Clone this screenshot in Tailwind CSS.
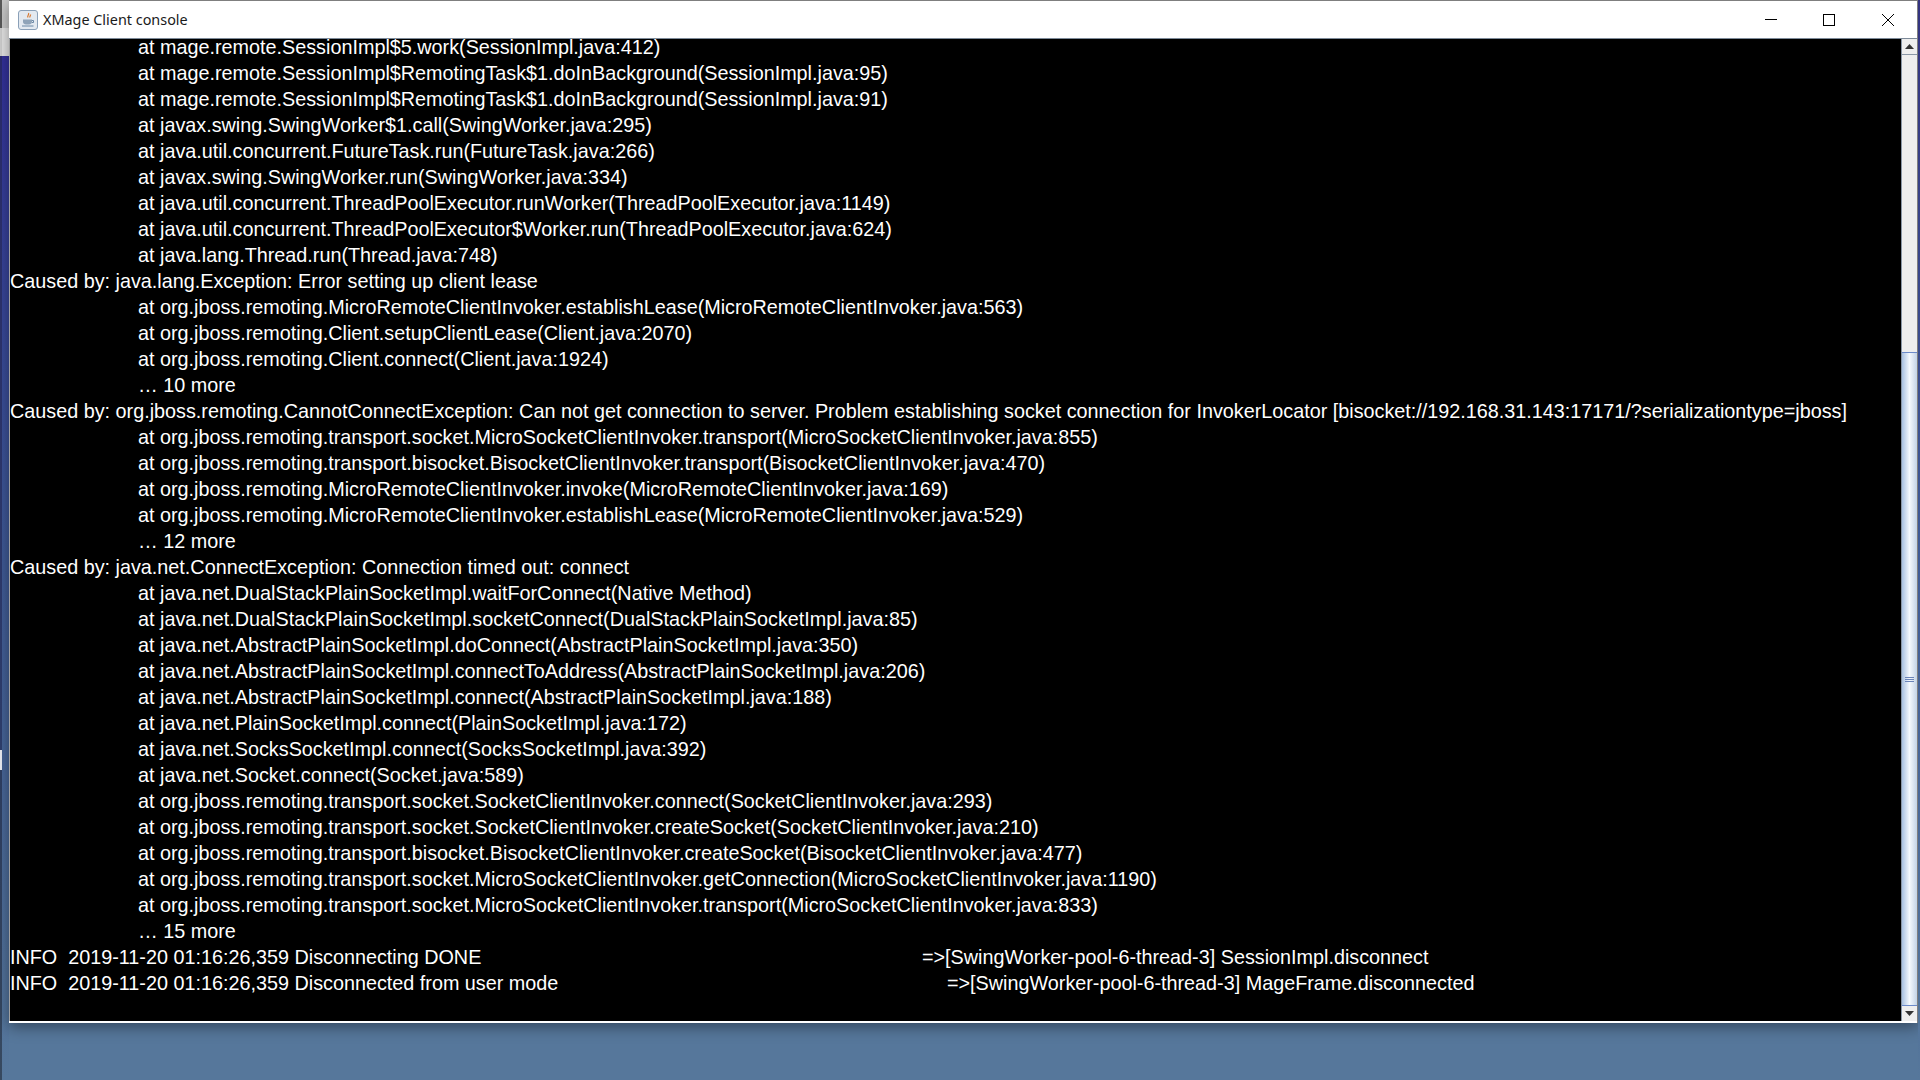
<!DOCTYPE html>
<html lang="en">
  <head>
    <meta charset="UTF-8" />
    <script src="https://cdn.jsdelivr.net/npm/@tailwindcss/browser@4"></script>
    <title>XMage Client console</title>
  </head>

  <body class="w-[1920px] h-[1080px] overflow-hidden bg-[#56779b] font-['Liberation_Sans',Arial,sans-serif] flex">
    <!-- sliver of the desktop to the left of the window -->
    <div class="w-[9px] h-[1080px] flex shrink-0">
      <div class="w-[2px] flex flex-col">
        <div class="h-[28px] bg-[#5a5a5a]"></div>
        <div class="h-[28px] bg-[#d0d0d0]"></div>
        <div class="h-[694px] bg-gradient-to-b from-[#2c2c6e] to-[#2f3f6e]"></div>
        <div class="h-[20px] bg-[#eef0f6]"></div>
        <div class="flex-1 bg-gradient-to-b from-[#2f3f63] to-[#37495f]"></div>
      </div>
      <div class="w-[7px] flex flex-col">
        <div class="h-[28px] bg-[#c9c9c9]"></div>
        <div class="h-[28px] bg-[#e6e6e6]"></div>
        <div class="flex-1 bg-gradient-to-b from-[#33309a] via-[#3f5a95] to-[#56779b]"></div>
      </div>
    </div>

    <!-- console window -->
    <div class="w-[1909px] h-[1023px] shrink-0 flex flex-col bg-white border-t border-r border-[#7f7f7f] shadow-[0_4px_14px_rgba(0,0,0,0.4)]">
      <div class="h-[37px] flex items-center shrink-0">
        <svg class="ml-[9px] w-[20px] h-[20px]" viewBox="0 0 20 20">
          <rect x="0.5" y="0.5" width="19" height="19" rx="2.500" fill="#e3e9f0" stroke="#8aa0b8" />
          <path d="M10.500 3c1.200 1.500-1.800 2.500-.5 4.500M12.500 4.500c.5 1-1.300 1.700-.5 3" fill="none" stroke="#d9762b" stroke-width="1.200" />
          <path d="M5 9.500h9v2.500c0 1.500-1.500 2.500-3 2.500H8c-1.500 0-3-1-3-2.500z" fill="#8fa3b8" />
          <path d="M14 10.500h1.500v2H14M4 16h11.500" fill="none" stroke="#6b88a6" stroke-width="1" />
        </svg>
        <span class="ml-[5px] text-[14.400px] text-[#1a1a1a] font-['Noto_Sans',sans-serif]">XMage Client console</span>
        <div class="ml-auto flex items-center mr-[23px]">
          <svg class="w-[12px] h-[12px] mr-[46px]" viewBox="0 0 12 12"><path d="M0 5.500h12" stroke="#000" stroke-width="1" /></svg>
          <svg class="w-[12px] h-[12px] mr-[47px]" viewBox="0 0 12 12"><rect x="0.5" y="0.5" width="11" height="11" fill="none" stroke="#000" stroke-width="1" /></svg>
          <svg class="w-[12px] h-[12px]" viewBox="0 0 12 12"><path d="M0 0l12 12M12 0L0 12" stroke="#000" stroke-width="1" /></svg>
        </div>
      </div>

      <div class="flex-1 flex min-h-0 border-t border-[#7d8a99] border-b-[2px] border-b-white">
        <!-- log output -->
        <div class="flex-1 bg-black border-l border-[#a0a0a0] text-white text-[19.800px] leading-[26px] whitespace-nowrap">
          <div class="-mt-[5px]">
            <div class="pl-[128px]">at mage.remote.SessionImpl$5.work(SessionImpl.java:412)</div>
            <div class="pl-[128px]">at mage.remote.SessionImpl$RemotingTask$1.doInBackground(SessionImpl.java:95)</div>
            <div class="pl-[128px]">at mage.remote.SessionImpl$RemotingTask$1.doInBackground(SessionImpl.java:91)</div>
            <div class="pl-[128px]">at javax.swing.SwingWorker$1.call(SwingWorker.java:295)</div>
            <div class="pl-[128px]">at java.util.concurrent.FutureTask.run(FutureTask.java:266)</div>
            <div class="pl-[128px]">at javax.swing.SwingWorker.run(SwingWorker.java:334)</div>
            <div class="pl-[128px]">at java.util.concurrent.ThreadPoolExecutor.runWorker(ThreadPoolExecutor.java:1149)</div>
            <div class="pl-[128px]">at java.util.concurrent.ThreadPoolExecutor$Worker.run(ThreadPoolExecutor.java:624)</div>
            <div class="pl-[128px]">at java.lang.Thread.run(Thread.java:748)</div>
            <div>Caused by: java.lang.Exception: Error setting up client lease</div>
            <div class="pl-[128px]">at org.jboss.remoting.MicroRemoteClientInvoker.establishLease(MicroRemoteClientInvoker.java:563)</div>
            <div class="pl-[128px]">at org.jboss.remoting.Client.setupClientLease(Client.java:2070)</div>
            <div class="pl-[128px]">at org.jboss.remoting.Client.connect(Client.java:1924)</div>
            <div class="pl-[128px]">… 10 more</div>
            <div>Caused by: org.jboss.remoting.CannotConnectException: Can not get connection to server. Problem establishing socket connection for InvokerLocator [bisocket://192.168.31.143:17171/?serializationtype=jboss]</div>
            <div class="pl-[128px]">at org.jboss.remoting.transport.socket.MicroSocketClientInvoker.transport(MicroSocketClientInvoker.java:855)</div>
            <div class="pl-[128px]">at org.jboss.remoting.transport.bisocket.BisocketClientInvoker.transport(BisocketClientInvoker.java:470)</div>
            <div class="pl-[128px]">at org.jboss.remoting.MicroRemoteClientInvoker.invoke(MicroRemoteClientInvoker.java:169)</div>
            <div class="pl-[128px]">at org.jboss.remoting.MicroRemoteClientInvoker.establishLease(MicroRemoteClientInvoker.java:529)</div>
            <div class="pl-[128px]">… 12 more</div>
            <div>Caused by: java.net.ConnectException: Connection timed out: connect</div>
            <div class="pl-[128px]">at java.net.DualStackPlainSocketImpl.waitForConnect(Native Method)</div>
            <div class="pl-[128px]">at java.net.DualStackPlainSocketImpl.socketConnect(DualStackPlainSocketImpl.java:85)</div>
            <div class="pl-[128px]">at java.net.AbstractPlainSocketImpl.doConnect(AbstractPlainSocketImpl.java:350)</div>
            <div class="pl-[128px]">at java.net.AbstractPlainSocketImpl.connectToAddress(AbstractPlainSocketImpl.java:206)</div>
            <div class="pl-[128px]">at java.net.AbstractPlainSocketImpl.connect(AbstractPlainSocketImpl.java:188)</div>
            <div class="pl-[128px]">at java.net.PlainSocketImpl.connect(PlainSocketImpl.java:172)</div>
            <div class="pl-[128px]">at java.net.SocksSocketImpl.connect(SocksSocketImpl.java:392)</div>
            <div class="pl-[128px]">at java.net.Socket.connect(Socket.java:589)</div>
            <div class="pl-[128px]">at org.jboss.remoting.transport.socket.SocketClientInvoker.connect(SocketClientInvoker.java:293)</div>
            <div class="pl-[128px]">at org.jboss.remoting.transport.socket.SocketClientInvoker.createSocket(SocketClientInvoker.java:210)</div>
            <div class="pl-[128px]">at org.jboss.remoting.transport.bisocket.BisocketClientInvoker.createSocket(BisocketClientInvoker.java:477)</div>
            <div class="pl-[128px]">at org.jboss.remoting.transport.socket.MicroSocketClientInvoker.getConnection(MicroSocketClientInvoker.java:1190)</div>
            <div class="pl-[128px]">at org.jboss.remoting.transport.socket.MicroSocketClientInvoker.transport(MicroSocketClientInvoker.java:833)</div>
            <div class="pl-[128px]">… 15 more</div>
            <div class="flex"><span class="w-[912px] whitespace-pre">INFO  2019-11-20 01:16:26,359 Disconnecting DONE</span><span>=&gt;[SwingWorker-pool-6-thread-3] SessionImpl.disconnect</span></div>
            <div class="flex"><span class="w-[937px] whitespace-pre">INFO  2019-11-20 01:16:26,359 Disconnected from user mode</span><span>=&gt;[SwingWorker-pool-6-thread-3] MageFrame.disconnected</span></div>
          </div>
        </div>

        <!-- scrollbar -->
        <div class="w-[16px] flex flex-col shrink-0 border-l border-[#8a97a6]">
          <div class="h-[16px] flex items-center justify-center bg-[#eeeeee] border-b border-[#8a97a6]">
            <svg class="w-[9px] h-[5px]" viewBox="0 0 9 5"><path d="M4.500 0L9 5H0z" fill="#333" /></svg>
          </div>
          <div class="h-[298px] bg-[#eeeeee] border-b border-[#6c8ac9]"></div>
          <div class="flex-1 flex items-center justify-center bg-gradient-to-r from-[#a9c1e0] via-[#f5f9fd] to-[#c3d3e6]">
            <div class="w-[9px] h-[5px] border-y border-[#6b84b8] flex items-center"><div class="w-full h-px bg-[#6b84b8]"></div></div>
          </div>
          <div class="h-[16px] flex items-center justify-center bg-[#eeeeee] border-t border-[#6c8ac9]">
            <svg class="w-[9px] h-[5px]" viewBox="0 0 9 5"><path d="M4.500 5L9 0H0z" fill="#333" /></svg>
          </div>
        </div>
      </div>
    </div>

    <!-- sliver of the desktop to the right of the window -->
    <div class="w-[2px] h-[1080px] shrink-0 bg-gradient-to-b from-[#33337f] via-[#3f5a95] to-[#56779b]"></div>
  </body>
</html>
